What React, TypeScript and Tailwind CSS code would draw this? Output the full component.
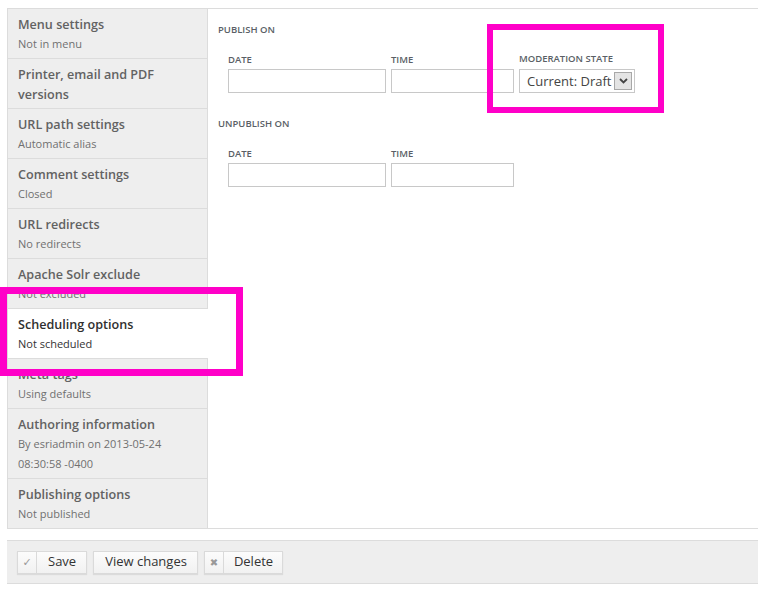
import React from "react";

const items: { title: string; sub: string[]; active?: boolean }[] = [
  { title: "Menu settings", sub: ["Not in menu"] },
  { title: "Printer, email and PDF versions", sub: [] },
  { title: "URL path settings", sub: ["Automatic alias"] },
  { title: "Comment settings", sub: ["Closed"] },
  { title: "URL redirects", sub: ["No redirects"] },
  { title: "Apache Solr exclude", sub: ["Not excluded"] },
  { title: "Scheduling options", sub: ["Not scheduled"], active: true },
  { title: "Meta tags", sub: ["Using defaults"] },
  { title: "Authoring information", sub: ["By esriadmin on 2013-05-24", "08:30:58 -0400"] },
  { title: "Publishing options", sub: ["Not published"] },
];

function Label({ children }: { children: React.ReactNode }) {
  return (
    <div className="text-[9.5px] leading-[14px] font-semibold uppercase text-[#5a5f66]">
      {children}
    </div>
  );
}

function Field({ label, w }: { label: string; w: string }) {
  return (
    <div className="flex flex-col">
      <Label>{label}</Label>
      <div className={`${w} h-[24px] mt-[2px] border border-[#c8c8c8] bg-white`} />
    </div>
  );
}

export default function App() {
  return (
    <div
      className="relative w-[758px] h-[592px] bg-white overflow-hidden pt-[8px] pl-[7px]"
      style={{ fontFamily: '"Open Sans", "DejaVu Sans", sans-serif' }}
    >
      <div className="flex border-t border-l border-b border-[#dcdcdc] h-[521px]">
        <div className="w-[200px] flex flex-col bg-[#eeeeee]">
          {items.map((it, i) => (
            <div
              key={i}
              className={`pl-[10px] pr-[10px] pt-[6px] border-b border-[#dcdcdc] ${
                it.sub.length ? "pb-[4px]" : "pb-[3px]"
              } ${it.active ? "bg-white w-[201px]" : "border-r"} ${
                i === items.length - 1 ? "border-b-0" : ""
              }`}
            >
              <div
                className={`text-[12.6px] leading-[20px] font-semibold ${
                  it.active ? "text-[#2f2f2f]" : "text-[#626262]"
                }`}
              >
                {it.title}
              </div>
              {it.sub.map((s, j) => (
                <div
                  key={j}
                  className={`text-[11px] leading-[20px] ${j === 0 ? "-mt-[1px]" : ""} ${
                    it.active ? "text-[#333]" : "text-[#707070]"
                  }`}
                >
                  {s}
                </div>
              ))}
            </div>
          ))}
          <div className="flex-1 border-r border-[#dcdcdc]" />
        </div>
        <div className="flex-1 bg-white pt-[14px] pl-[10px]">
          <Label>Publish on</Label>
          <div className="flex items-end gap-[5px] pl-[10px] mt-[15px]">
            <Field label="Date" w="w-[158px]" />
            <Field label="Time" w="w-[123px]" />
            <div className="flex flex-col">
              <Label>Moderation state</Label>
              <div className="w-[116px] h-[24px] mt-[3px] border border-[#c8c8c8] bg-white flex items-center pl-[7px] pr-[2px] justify-between">
                <span className="text-[13px] text-[#444] leading-none">Current: Draft</span>
                <span className="w-[18px] h-[18px] bg-[#e4e4e4] border border-[#a8a8a8] flex items-center justify-center">
                  <svg width="9" height="6" viewBox="0 0 9 6">
                    <path d="M1 1l3.5 3.5L8 1" stroke="#444" strokeWidth="1.8" fill="none" />
                  </svg>
                </span>
              </div>
            </div>
          </div>
          <div className="mt-[24px]">
            <Label>Unpublish on</Label>
          </div>
          <div className="flex items-end gap-[5px] pl-[10px] mt-[16px]">
            <Field label="Date" w="w-[158px]" />
            <Field label="Time" w="w-[123px]" />
          </div>
        </div>
      </div>

      <div className="mt-[11px] h-[44px] bg-[#eeeeee] border-t border-b border-[#dcdcdc] flex items-center gap-[6px] pl-[10px]">
        <button className="h-[23px] flex items-stretch border border-[#dadada] bg-gradient-to-b from-[#fcfcfc] to-[#f1f1f1] shadow-[0_1px_1px_rgba(0,0,0,0.08)] text-[13px] text-[#333]">
          <span className="w-[19px] flex items-center justify-center border-r border-[#dadada] text-[#999] text-[11px]">✓</span>
          <span className="pl-[11px] pr-[10px] flex items-center">Save</span>
        </button>
        <button className="h-[23px] pl-[11px] pr-[10px] flex items-center border border-[#dadada] bg-gradient-to-b from-[#fcfcfc] to-[#f1f1f1] shadow-[0_1px_1px_rgba(0,0,0,0.08)] text-[13px] text-[#333]">
          View changes
        </button>
        <button className="h-[23px] flex items-stretch border border-[#dadada] bg-gradient-to-b from-[#fcfcfc] to-[#f1f1f1] shadow-[0_1px_1px_rgba(0,0,0,0.08)] text-[13px] text-[#333]">
          <span className="w-[19px] flex items-center justify-center border-r border-[#dadada] text-[#999] text-[10px]">✖</span>
          <span className="pl-[10px] pr-[9px] flex items-center">Delete</span>
        </button>
      </div>

      <div className="absolute left-[487px] top-[24px] w-[177px] h-[89px] border-[6px] border-[#ff00c8]" />
      <div className="absolute left-0 top-[287px] w-[243px] h-[89px] border-[7px] border-[#ff00c8]" />
    </div>
  );
}
